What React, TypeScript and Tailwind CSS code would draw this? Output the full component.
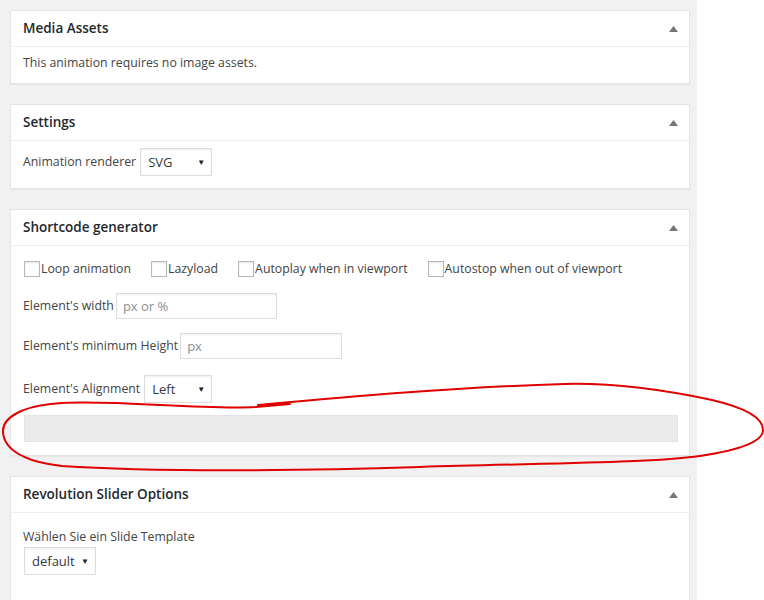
import type { ReactNode } from "react";

function Caret() {
  return (
    <svg width="9" height="6" viewBox="0 0 9 6" className="shrink-0">
      <polygon points="4.5,0 9,6 0,6" fill="#72777c" />
    </svg>
  );
}

function Postbox({ title, children }: { title: string; children: ReactNode }) {
  return (
    <div className="mb-[20px] border border-[#e5e5e5] bg-white shadow-[0_1px_1px_rgba(0,0,0,0.04)]">
      <div className="flex h-[36px] items-center justify-between border-b border-[#eee] pl-[12px] pr-[11px]">
        <h2 className="text-[13.5px] font-semibold text-[#23282d]">{title}</h2>
        <Caret />
      </div>
      {children}
    </div>
  );
}

function FakeSelect({ value, width }: { value: string; width: string }) {
  return (
    <div
      className={`flex h-[28px] items-center justify-between border border-[#ddd] bg-white pl-[7px] pr-[6px] text-[13px] text-[#32373c] shadow-[inset_0_1px_2px_rgba(0,0,0,0.07)] ${width}`}
    >
      <span className="pt-[1px]">{value}</span>
      <span className="text-[8px] text-[#222]">▼</span>
    </div>
  );
}

function Check({ label }: { label: string }) {
  return (
    <label className="flex items-center">
      <span className="h-[16px] w-[16px] border border-[#b4b9be] bg-white shadow-[inset_0_1px_2px_rgba(0,0,0,0.1)]" />
      <span className="ml-[1px]">{label}</span>
    </label>
  );
}

function TextInput({ placeholder, width }: { placeholder: string; width: string }) {
  return (
    <input
      placeholder={placeholder}
      className={`h-[26px] border border-[#ddd] bg-white px-[6px] text-[13px] text-[#32373c] shadow-[inset_0_1px_2px_rgba(0,0,0,0.07)] outline-none placeholder:text-[#8a8f94] ${width}`}
    />
  );
}

export default function App() {
  return (
    <div className="relative flex h-[600px] w-full overflow-hidden font-['Open_Sans',sans-serif] text-[12.3px] text-[#444]">
      <div className="w-[697px] shrink-0 bg-[#f1f1f1] pl-[10px] pr-[7px] pt-[10px]">
        <Postbox title="Media Assets">
          <div className="h-[36px] px-[12px] pt-[6px] leading-[20px]">
            This animation requires no image assets.
          </div>
        </Postbox>

        <Postbox title="Settings">
          <div className="flex items-center gap-[4px] px-[12px] pb-[12px] pt-[7px]">
            <span>Animation renderer</span>
            <FakeSelect value="SVG" width="w-[72px]" />
          </div>
        </Postbox>

        <Postbox title="Shortcode generator">
          <div className="px-[12px] pb-[13px] pt-[15px]">
            <div className="flex h-[16px] items-center gap-[20px] pl-[1px]">
              <Check label="Loop animation" />
              <Check label="Lazyload" />
              <Check label="Autoplay when in viewport" />
              <Check label="Autostop when out of viewport" />
            </div>
            <div className="mt-[16px] flex items-center gap-[2px]">
              <span>Element's width</span>
              <TextInput placeholder="px or %" width="w-[161px]" />
            </div>
            <div className="mt-[14px] flex items-center gap-[2px]">
              <span>Element's minimum Height</span>
              <TextInput placeholder="px" width="w-[162px]" />
            </div>
            <div className="mt-[16px] flex items-center gap-[4px]">
              <span>Element's Alignment</span>
              <FakeSelect value="Left" width="w-[68px]" />
            </div>
            <div className="ml-[1px] mt-[12px] h-[27px] w-[654px] border border-[#e4e4e4] bg-[#ebebeb]" />
          </div>
        </Postbox>

        <Postbox title="Revolution Slider Options">
          <div className="px-[12px] pb-[40px] pt-[14px]">
            <div className="leading-[20px]">Wählen Sie ein Slide Template</div>
            <div className="ml-[1px]">
              <FakeSelect value="default" width="w-[72px]" />
            </div>
          </div>
        </Postbox>
      </div>
      <div className="flex-1 bg-white" />

      <svg
        className="pointer-events-none absolute left-0 top-0"
        width="764"
        height="600"
        viewBox="0 0 764 600"
      >
        <path
          d="M290 404 L256 407 C200 410 120 400 62 403 C22 405 2 418 3 432 C4 450 25 462 62 466 C150 472 300 471 420 467 C550 463 650 463 700 456 C740 450 763 442 763 430 C763 416 742 407 712 400 C655 388 605 383 565 384 C455 387 335 398 258 405"
          fill="none"
          stroke="#e00000"
          strokeWidth="2"
          strokeLinecap="round"
          strokeLinejoin="round"
        />
      </svg>
    </div>
  );
}
